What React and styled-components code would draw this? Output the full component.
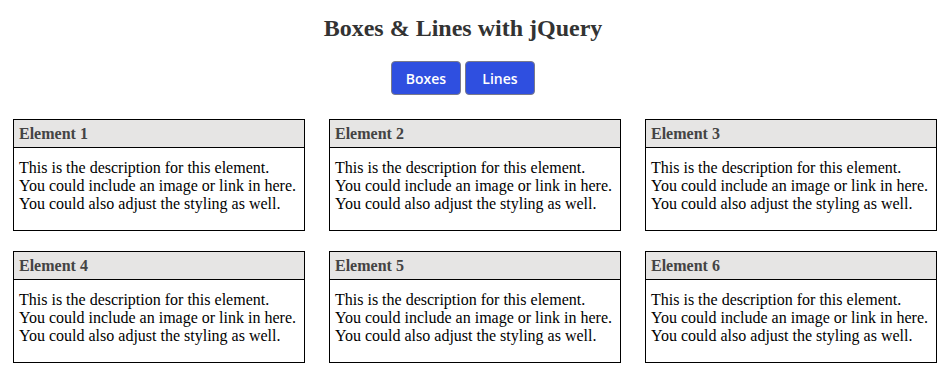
import styled, { createGlobalStyle } from "styled-components"

const GlobalStyle = createGlobalStyle`
    body {
        margin: 0;
        background: #fff;
        font-family: "Liberation Serif", "Times New Roman", serif;
    }
`

const Page = styled.div`
    padding: 14px 12px 0 13px;
`

const Heading = styled.div`
    padding-right: 24px;
`

const Title = styled.h1`
    margin: 0;
    text-align: center;
    font-size: 24px;
    line-height: 28px;
    font-weight: bold;
    color: #333;
`

const Toolbar = styled.div`
    display: flex;
    justify-content: center;
    gap: 4px;
    margin-top: 19px;
`

const Button = styled.button`
    width: 70px;
    height: 34px;
    padding: 0;
    border: 1px solid #7a7a8a;
    border-radius: 4px;
    background-color: #2f4fe0;
    color: #fff;
    font-family: "Open Sans", "Noto Sans", sans-serif;
    font-size: 14px;
    font-weight: 600;
    cursor: pointer;
`

const Grid = styled.div`
    display: grid;
    grid-template-columns: repeat(3, 292px);
    column-gap: 24px;
    row-gap: 20px;
    margin-top: 24px;
`

const Box = styled.div`
    border: 1px solid #000;
    height: 112px;
    box-sizing: border-box;
`

const Header = styled.div`
    background-color: #e6e5e4;
    border-bottom: 1px solid #000;
    height: 28px;
    box-sizing: border-box;
    padding: 1px 5px 0;
    display: flex;
    align-items: center;
    font-size: 16px;
    font-weight: bold;
    color: #444;
`

const Body = styled.div`
    padding: 11px 5px;
    font-size: 16px;
    line-height: 18px;
    color: #000;
`

const elements = [1, 2, 3, 4, 5, 6]

const App = () => {
    return (
        <Page>
            <GlobalStyle />
            <Heading>
                <Title>Boxes &amp; Lines with jQuery</Title>
                <Toolbar>
                    <Button>Boxes</Button>
                    <Button>Lines</Button>
                </Toolbar>
            </Heading>
            <Grid>
                {elements.map((n) => (
                    <Box key={n}>
                        <Header>Element {n}</Header>
                        <Body>
                            This is the description for this element.
                            <br />
                            You could include an image or link in here.
                            <br />
                            You could also adjust the styling as well.
                        </Body>
                    </Box>
                ))}
            </Grid>
        </Page>
    )
}

export default App
